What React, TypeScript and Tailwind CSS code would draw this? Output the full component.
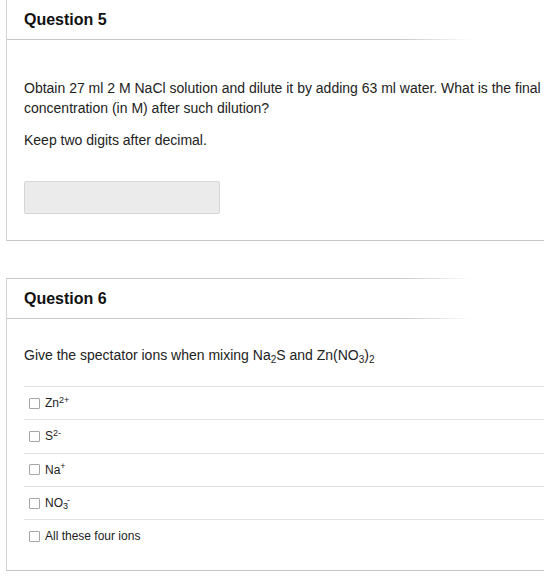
const options = [
  { key: "zn", label: <>Zn<sup className="text-[9px]">2+</sup></> },
  { key: "s", label: <>S<sup className="text-[9px]">2-</sup></> },
  { key: "na", label: <>Na<sup className="text-[9px]">+</sup></> },
  {
    key: "no3",
    label: (
      <>
        NO<sub className="text-[9px]">3</sub>
        <sup className="text-[9px] -ml-[1px]">-</sup>
      </>
    ),
  },
  { key: "all", label: <>All these four ions</> },
];

function CardHeader({ title }: { title: string }) {
  return (
    <div>
      <div className="h-[39px] flex items-center pl-[17px]">
        <h2 className="text-[16px] font-bold text-[#111]">{title}</h2>
      </div>
      <div className="h-px w-[490px] bg-linear-to-r from-[#c6c6c6] from-80% to-transparent to-95%" />
    </div>
  );
}

export default function App() {
  return (
    <div
      className="w-[544px] h-[576px] overflow-hidden bg-white text-[#222]"
      style={{ fontFamily: '"Liberation Sans", Arial, sans-serif' }}
    >
      {/* Question 5 */}
      <div className="ml-[6px] w-[560px] border-l border-b border-l-[#d2d2d2] border-b-[#c8c8c8]">
        <CardHeader title="Question 5" />
        <div className="pl-[17px] pt-[38px] pb-[26px]">
          <p className="text-[14px] leading-[20px] w-[525px]">
            Obtain 27 ml 2 M NaCl solution and dilute it by adding 63 ml water. What is the final
            concentration (in M) after such dilution?
          </p>
          <p className="text-[14px] leading-[20px] mt-[12px]">Keep two digits after decimal.</p>
          <input
            type="text"
            className="mt-[31px] block w-[196px] h-[33px] bg-[#ebebeb] border border-[#d6d6d6] rounded-[2px]"
          />
        </div>
      </div>

      {/* Question 6 */}
      <div className="mt-[37px] ml-[6px] w-[560px] border-l border-b border-l-[#d2d2d2] border-b-[#c4c4c4]">
        <div className="h-px w-[490px] bg-linear-to-r from-[#c6c6c6] from-80% to-transparent to-95%" />
        <CardHeader title="Question 6" />
        <div className="pl-[17px] pt-[26px] pb-[18px]">
          <p className="text-[14px] leading-[20px]">
            Give the spectator ions when mixing Na<sub className="text-[10px]">2</sub>S and Zn(NO
            <sub className="text-[10px]">3</sub>)<sub className="text-[10px]">2</sub>
          </p>
          <ul className="mt-[21px]">
            {options.map((o) => (
              <li
                key={o.key}
                className="h-[33.3px] border-t border-[#e2e2e2] flex items-center pl-[5px] gap-[5px] text-[12px]"
              >
                <span className="w-[11px] h-[11px] border border-[#a6a6a6] rounded-[1px] bg-white shrink-0" />
                <span className="leading-none">{o.label}</span>
              </li>
            ))}
          </ul>
        </div>
      </div>
    </div>
  );
}
